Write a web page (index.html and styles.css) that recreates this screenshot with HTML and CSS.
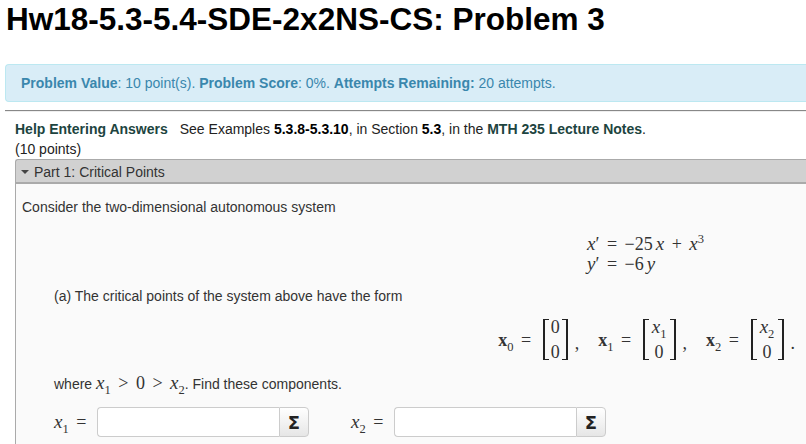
FILE: index.html
```html
<!DOCTYPE html>
<html lang="en">
<head>
    <meta charset="UTF-8">
    <link rel="stylesheet" href="styles.css">
    <title>Hw18-5.3-5.4-SDE-2x2NS-CS: Problem 3</title>
</head>
<body>
    <h1 class="title">Hw18-5.3-5.4-SDE-2x2NS-CS: Problem 3</h1>

    <div class="alert">
        <b>Problem Value</b>: 10 point(s). <b>Problem Score</b>: 0%. <b>Attempts Remaining:</b> 20 attempts.
    </div>

    <hr class="rule">

    <div class="problem">
        <p class="help"><b class="help-link">Help Entering Answers</b><span class="see">See Examples <b>5.3.8-5.3.10</b>, in Section <b>5.3</b>, in the <b class="help-link">MTH 235 Lecture Notes</b>.</span></p>
        <p class="points">(10 points)</p>

        <div class="part-head"><span class="caret"></span>Part 1: Critical Points</div>
        <div class="part-body">
            <p class="intro">Consider the two-dimensional autonomous system</p>

            <div class="system">
                <div class="math"><i>x</i>′<span class="eq">=</span>−25<i class="thin">x</i><span class="eq">+</span><i>x</i><sup>3</sup></div>
                <div class="math"><i>y</i>′<span class="eq">=</span>−6<i class="thin">y</i></div>
            </div>

            <div class="indented">
                <p class="form-text">(a) The critical points of the system above have the form</p>

                <div class="vectors math">
                    <span class="vec-label"><b>x</b><sub>0</sub><span class="eq">=</span></span>
                    <span class="matrix narrow"><span>0</span><span>0</span></span>
                    <span class="comma">,</span>
                    <span class="vec-label"><b>x</b><sub>1</sub><span class="eq">=</span></span>
                    <span class="matrix"><span><i>x</i><sub>1</sub></span><span>0</span></span>
                    <span class="comma">,</span>
                    <span class="vec-label"><b>x</b><sub>2</sub><span class="eq">=</span></span>
                    <span class="matrix"><span><i>x</i><sub>2</sub></span><span>0</span></span>
                    <span class="stop">.</span>
                </div>

                <p class="where">where <span class="math"><i>x</i><sub>1</sub><span class="eq">&gt;</span>0<span class="eq">&gt;</span><i>x</i><sub>2</sub></span>. Find these components.</p>

                <div class="answers">
                    <div class="answer">
                        <span class="math answer-label"><i>x</i><sub>1</sub><span class="eq">=</span></span>
                        <span class="field"><input type="text" class="field-input"><button type="button" class="sigma">Σ</button></span>
                    </div>
                    <div class="answer">
                        <span class="math answer-label"><i>x</i><sub>2</sub><span class="eq">=</span></span>
                        <span class="field"><input type="text" class="field-input"><button type="button" class="sigma">Σ</button></span>
                    </div>
                </div>
            </div>
        </div>
    </div>
</body>
</html>
```

FILE: styles.css
```css
body {
    margin: 0;
    background-color: #fff;
    color: #333;
    font-family: 'Liberation Sans', Arial, sans-serif;
    font-size: 14px;
    line-height: 20px;
}

p {
    margin: 0;
}

.title {
    margin: 0;
    padding: 0 0 0 6px;
    height: 64px;
    color: #000;
    font-size: 31.5px;
    line-height: 38px;
    font-weight: bold;
}

.alert {
    margin-left: 5px;
    height: 36px;
    padding-left: 15px;
    border: 1px solid #bce8f1;
    border-right: none;
    border-radius: 4px 0 0 4px;
    background-color: #d9edf7;
    color: #3a87ad;
    line-height: 36px;
}

.rule {
    margin: 8px 0 0 5px;
    border: none;
    border-top: 1px solid #888;
    border-bottom: 1px solid #eee;
}

.problem {
    padding: 7px 0 0 15px;
}

.help {
    color: #222;
}

.help-link {
    color: #1d4440;
}

.help b:not(.help-link) {
    color: #000;
}

.see {
    margin-left: 12px;
}

.points {
    color: #222;
}

.part-head {
    height: 22px;
    padding-left: 5px;
    border-top: 1px solid #aaa;
    border-left: 1px solid #aaa;
    border-bottom: 2px solid #aaa;
    border-radius: 3px 0 0 0;
    background-color: #d1d1d1;
    color: #333;
    line-height: 24px;
}

.caret {
    display: inline-block;
    margin: 0 5px 3px 0;
    border-top: 4px solid #444;
    border-left: 4px solid transparent;
    border-right: 4px solid transparent;
}

.part-body {
    box-sizing: border-box;
    height: 261px;
    padding: 13px 0 0 6px;
    border-left: 1px solid #aaa;
    background-color: #fafafa;
    color: #333;
}

.math {
    font-family: 'Liberation Serif', 'Times New Roman', serif;
    font-size: 18px;
    color: #333;
}

.math i {
    font-size: 19px;
}

.math sub,
.math sup {
    font-size: 12.5px;
    line-height: 0;
}

.eq {
    margin: 0 7.5px;
    line-height: 0;
}

.thin {
    margin-left: 3px;
}

.system {
    height: 51px;
    margin: 17px 0 0 565px;
}

.indented {
    padding-left: 32px;
}

.form-text {
    margin-top: 1px;
}

.vectors {
    display: flex;
    align-items: center;
    justify-content: flex-end;
    height: 41px;
    margin-top: 13px;
    padding-right: 11px;
}

.vec-label {
    margin-right: 4px;
}

.matrix {
    display: flex;
    flex-direction: column;
    align-items: center;
    justify-content: space-between;
    position: relative;
    box-sizing: border-box;
    width: 33px;
    height: 41px;
    line-height: 16px;
}

.matrix.narrow {
    width: 25px;
}

/* square brackets */
.matrix::before,
.matrix::after {
    content: "";
    position: absolute;
    top: 0;
    bottom: 0;
    width: 4px;
    border: 1px solid #222;
}

.matrix::before {
    left: 0;
    border-right: none;
    border-left-width: 2px;
}

.matrix::after {
    right: 0;
    border-left: none;
    border-right-width: 2px;
}

.comma {
    width: 23.5px;
    padding: 7px 0 0 7px;
}

.stop {
    padding: 7px 0 0 7px;
}

.where {
    margin-top: 13px;
}

.answers {
    display: flex;
    margin-top: 13px;
}

.answer {
    display: flex;
    align-items: center;
    width: 297px;
}

.answer-label {
    width: 43px;
}

.field {
    display: flex;
    height: 30px;
}

.field-input {
    box-sizing: border-box;
    width: 182px;
    height: 30px;
    margin: 0;
    border: 1px solid #ccc;
    border-right: none;
    border-radius: 4px 0 0 4px;
    background-color: #fff;
}

.sigma {
    box-sizing: border-box;
    width: 30px;
    height: 30px;
    padding: 0;
    border: 1px solid #ccc;
    border-radius: 0 4px 4px 0;
    background: linear-gradient(#fff, #e6e6e6);
    color: #222;
    font-family: 'DejaVu Sans', sans-serif;
    font-size: 18px;
    font-weight: bold;
}
```
